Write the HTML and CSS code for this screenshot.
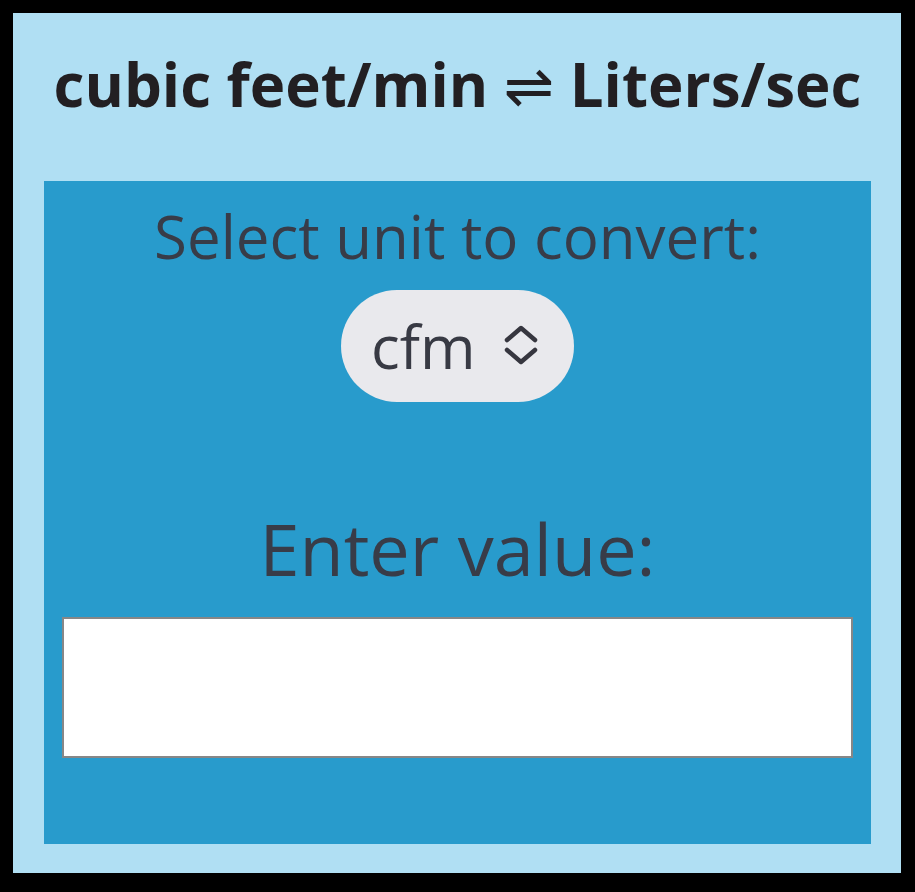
FILE: index.html
```html
<!DOCTYPE html>
<html lang="en">
<head>
    <meta charset="UTF-8">
    <meta name="viewport" content="width=device-width, initial-scale=1.0">
    <title>cubic feet/min to Liters/sec</title>
    <link rel="stylesheet" href="styles.css">
</head>
<body>
    <div class="card">
        <h1>cubic feet/min <span class="swap">⇌</span> Liters/sec</h1>

        <div class="panel">
            <h2 class="label">Select unit to convert:</h2>

            <div class="select-wrap">
                <select id="unit" class="unit-select">
                    <option value="cfm">cfm</option>
                    <option value="lps">L/s</option>
                </select>
                <svg class="chevrons" width="34" height="40" viewBox="0 0 34 40">
                    <path d="M3 15 L17 3 L31 15" fill="none" stroke="#36363f" stroke-width="4.5" stroke-linecap="round" stroke-linejoin="round"/>
                    <path d="M3 25 L17 37 L31 25" fill="none" stroke="#36363f" stroke-width="4.5" stroke-linecap="round" stroke-linejoin="round"/>
                </svg>
            </div>

            <h2 class="label label-big">Enter value:</h2>
            <input type="text" id="valueInput" class="value-input">
        </div>
    </div>
</body>
</html>
```

FILE: styles.css
```css
body {
    margin: 0;
    padding: 13px 14px 19px 13px;
    background-color: #000;
    font-family: "Open Sans", "Noto Sans", sans-serif;
}
.card {
    background-color: #b0dff3;
    padding: 31px 30px 29px 31px;
}
h1 {
    margin: 0 0 57px;
    font-size: 60px;
    line-height: 80px;
    font-weight: 700;
    color: #221f22;
    text-align: center;
    white-space: nowrap;
}
.swap {
    font-family: "DejaVu Sans", sans-serif;
    font-weight: 400;
    font-size: 60px;
    line-height: 1;
}
.panel {
    background-color: #289bcc;
    padding: 19px 18px 86px;
    text-align: center;
}
.label {
    margin: 0;
    font-size: 60px;
    line-height: 72px;
    font-weight: 400;
    color: #383c48;
}
.label-big {
    margin-top: 103px;
    margin-bottom: 26px;
    font-size: 72px;
    line-height: 86px;
}
.select-wrap {
    position: relative;
    display: inline-block;
    margin-top: 18px;
}
.unit-select {
    appearance: none;
    -webkit-appearance: none;
    width: 233px;
    height: 112px;
    padding: 0 0 0 30px;
    border: none;
    border-radius: 56px;
    background-color: #e9e9ed;
    color: #383a44;
    font-family: "Open Sans", "Noto Sans", sans-serif;
    font-size: 60px;
    text-align: left;
    display: block;
}
.chevrons {
    position: absolute;
    right: 36px;
    top: 35px;
    pointer-events: none;
}
.value-input {
    display: block;
    width: 100%;
    height: 141px;
    box-sizing: border-box;
    margin: 0;
    border: 2px solid #878787;
    background-color: #fff;
    font-size: 48px;
}
```
